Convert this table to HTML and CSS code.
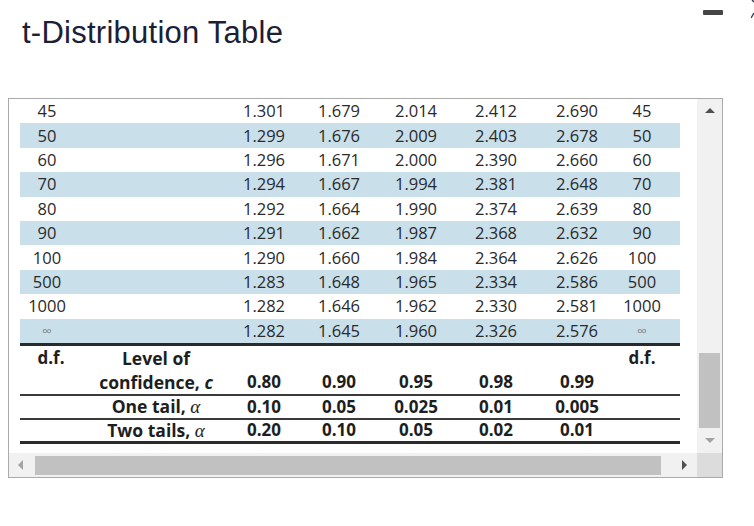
FILE: index.html
```html
<!DOCTYPE html>
<html lang="en">
<head>
<meta charset="utf-8">
<title>t-Distribution Table</title>
<link rel="stylesheet" href="styles.css">
</head>
<body>
<div class="page">
  <header class="head">
    <h1 class="title">t-Distribution Table</h1>
    <span class="minimize"></span>
    <svg class="edge" width="3" height="20" viewBox="0 0 3 20"><path d="M1 0 L3 2 M3 13 L0 18" stroke="#2a3550" stroke-width="1.4" fill="none"/></svg>
  </header>

  <div class="frame">
    <div class="viewport">
      <table class="tdist">
        <colgroup>
          <col class="c-df"><col class="c-label"><col class="c-a"><col class="c-b"><col class="c-c"><col class="c-d"><col class="c-e"><col class="c-df2">
        </colgroup>
        <tbody class="data">
          <tr><td>45</td><td></td><td>1.301</td><td>1.679</td><td>2.014</td><td>2.412</td><td>2.690</td><td class="r">45</td></tr>
          <tr class="alt"><td>50</td><td></td><td>1.299</td><td>1.676</td><td>2.009</td><td>2.403</td><td>2.678</td><td class="r">50</td></tr>
          <tr><td>60</td><td></td><td>1.296</td><td>1.671</td><td>2.000</td><td>2.390</td><td>2.660</td><td class="r">60</td></tr>
          <tr class="alt"><td>70</td><td></td><td>1.294</td><td>1.667</td><td>1.994</td><td>2.381</td><td>2.648</td><td class="r">70</td></tr>
          <tr><td>80</td><td></td><td>1.292</td><td>1.664</td><td>1.990</td><td>2.374</td><td>2.639</td><td class="r">80</td></tr>
          <tr class="alt"><td>90</td><td></td><td>1.291</td><td>1.662</td><td>1.987</td><td>2.368</td><td>2.632</td><td class="r">90</td></tr>
          <tr><td>100</td><td></td><td>1.290</td><td>1.660</td><td>1.984</td><td>2.364</td><td>2.626</td><td class="r">100</td></tr>
          <tr class="alt"><td>500</td><td></td><td>1.283</td><td>1.648</td><td>1.965</td><td>2.334</td><td>2.586</td><td class="r">500</td></tr>
          <tr><td>1000</td><td></td><td>1.282</td><td>1.646</td><td>1.962</td><td>2.330</td><td>2.581</td><td class="r">1000</td></tr>
          <tr class="alt last"><td><span class="inf">∞</span></td><td></td><td>1.282</td><td>1.645</td><td>1.960</td><td>2.326</td><td>2.576</td><td class="r"><span class="inf">∞</span></td></tr>
        </tbody>
        <tbody class="foot">
          <tr class="fa"><td class="dfl">d.f.</td><td class="lbl">Level of</td><td></td><td></td><td></td><td></td><td></td><td class="r">d.f.</td></tr>
          <tr class="fb"><td></td><td class="lbl">confidence, <i>c</i></td><td>0.80</td><td>0.90</td><td>0.95</td><td>0.98</td><td>0.99</td><td></td></tr>
          <tr class="fc"><td></td><td class="lbl">One tail, <span class="alpha">α</span></td><td>0.10</td><td>0.05</td><td>0.025</td><td>0.01</td><td>0.005</td><td></td></tr>
          <tr class="fd"><td></td><td class="lbl">Two tails, <span class="alpha">α</span></td><td>0.20</td><td>0.10</td><td>0.05</td><td>0.02</td><td>0.01</td><td></td></tr>
        </tbody>
      </table>
    </div>

    <div class="vbar">
      <div class="sbtn"><span class="tri tri-up"></span></div>
      <div class="vtrack"><div class="vthumb"></div></div>
      <div class="sbtn"><span class="tri tri-down"></span></div>
    </div>

    <div class="hbar">
      <div class="sbtn"><span class="tri tri-left"></span></div>
      <div class="htrack"><div class="hthumb"></div></div>
      <div class="sbtn"><span class="tri tri-right"></span></div>
    </div>

    <div class="corner"></div>
  </div>
</div>
</body>
</html>
```

FILE: styles.css
```css
html, body {
  margin: 0;
  background: #ffffff;
}

.page {
  padding: 10px 0 0 8px;
}

.head {
  display: flex;
  align-items: flex-start;
}

.title {
  flex: 1;
  margin: 6px 0 0 14px;
  font: 400 31px/34px "Liberation Sans", Arial, sans-serif;
  letter-spacing: 0.25px;
  color: #1b2035;
}

.minimize {
  width: 20px;
  height: 5px;
  background: #454545;
  border-radius: 1px;
  margin-right: 28px;
}

.edge {
  margin-top: -10px;
  display: block;
}

.frame {
  margin-top: 48px;
  width: 715px;
  height: 380px;
  box-sizing: border-box;
  border: 1px solid #aaaaaa;
  display: grid;
  grid-template-columns: 688px 25px;
  grid-template-rows: 354px 24px;
}

.viewport {
  overflow: hidden;
  background: #ffffff;
}

.tdist {
  margin-left: 11px;
  width: 660px;
  table-layout: fixed;
  border-collapse: separate;
  border-spacing: 0;
  font-family: "Open Sans", "Noto Sans", sans-serif;
  color: #231f20;
}

.c-df { width: 54px; }
.c-label { width: 152px; }
.c-a { width: 76px; }
.c-b { width: 74px; }
.c-c { width: 80px; }
.c-d { width: 80px; }
.c-e { width: 82px; }
.c-df2 { width: 62px; }

.tdist td {
  padding: 0;
  text-align: center;
  white-space: nowrap;
}

.tdist td.r {
  padding-right: 14px;
}

.data td {
  height: 24.4px;
  font-size: 16.5px;
  line-height: 20px;
  color: #2a2a2a;
}

.data tr.alt td {
  background: #c9dfea;
}

.data tr.last td {
  border-bottom: 3px solid #2b2b2b;
}

.inf {
  font-size: 14px;
  color: #8a8a8a;
}

.foot td {
  font-size: 17px;
  font-weight: 700;
  line-height: 20px;
  color: #1e1e1e;
}

.foot td.lbl {
  font-size: 17.5px;
  padding-left: 12px;
}

.foot .fa td { height: 24px; }
.foot .fb td { height: 24px; border-bottom: 2px solid #3a3a3a; }
.foot .fc td { height: 22px; border-bottom: 2px solid #3a3a3a; }
.foot .fd td { height: 21px; border-bottom: 3px solid #2b2b2b; }

.foot td.dfl {
  padding-left: 8px;
}

.foot i {
  font-style: italic;
}

.alpha {
  font-family: "Liberation Serif", "Times New Roman", serif;
  font-style: italic;
  font-weight: 400;
  font-size: 19px;
}

/* scrollbars */
.vbar {
  display: grid;
  grid-template-rows: 25px 1fr 25px;
  background: #f1f1f1;
}

.hbar {
  display: grid;
  grid-template-columns: 25px 1fr 25px;
  background: #f1f1f1;
}

.sbtn {
  display: flex;
  align-items: center;
  justify-content: center;
}

.vtrack {
  display: flex;
  flex-direction: column;
  justify-content: flex-end;
  padding: 0 2px;
}

.vthumb {
  height: 75px;
  background: #c1c1c1;
}

.htrack {
  display: flex;
  padding: 3px 0 2px 1px;
}

.hthumb {
  width: 626px;
  background: #c1c1c1;
}

.corner {
  background: #dcdcdc;
}

.tri {
  width: 0;
  height: 0;
  border-style: solid;
}

.tri-up {
  border-width: 0 5px 5px 5px;
  border-color: transparent transparent #505050 transparent;
  margin-top: -2px;
}

.tri-down {
  border-width: 5px 5px 0 5px;
  border-color: #a3a3a3 transparent transparent transparent;
}

.tri-left {
  border-width: 5px 5px 5px 0;
  border-color: transparent #a3a3a3 transparent transparent;
  margin-left: -3px;
}

.tri-right {
  border-width: 5px 0 5px 5px;
  border-color: transparent transparent transparent #505050;
}
```
